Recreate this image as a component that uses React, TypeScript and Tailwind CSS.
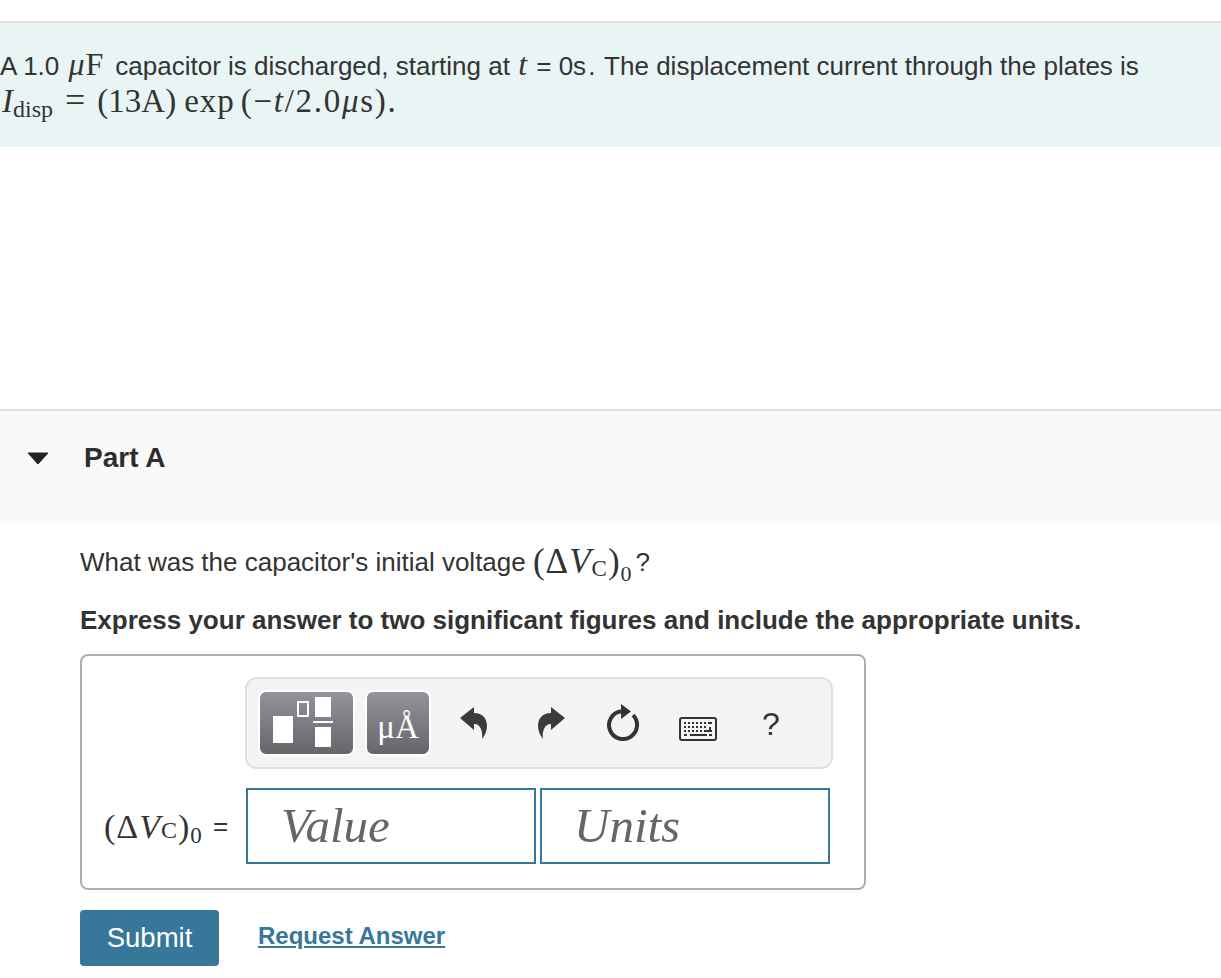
const sans = "font-['Liberation_Sans',Arial,sans-serif]"

function Serif({ children, className = '' }: { children: React.ReactNode; className?: string }) {
  return <span className={`font-['Liberation_Serif',serif] ${className}`}>{children}</span>
}

function UndoIcon({ flip = false }: { flip?: boolean }) {
  return (
    <svg width="28" height="34" viewBox="0 0 28 34" className={flip ? '-scale-x-100' : ''}>
      <path d="M1 12 L15 1 L15 7 C24 7 28 13 28 20 C28 25 26 29 23 33 C24 26 22 18 15 18 L15 24 Z" fill="#3b3b3b" />
    </svg>
  )
}

function RefreshIcon() {
  return (
    <svg width="34" height="38" viewBox="0 0 34 38">
      <path d="M15 7.200 A14 14 0 1 0 27 11.200" fill="none" stroke="#333" strokeWidth="4" />
      <path d="M15 0 L25 7.500 L15 15 Z" fill="#333" />
    </svg>
  )
}

function KeyboardIcon() {
  return (
    <svg width="38" height="24" viewBox="0 0 38 24">
      <rect x="1" y="1" width="36" height="22" rx="2" fill="#f4f4f4" stroke="#333" strokeWidth="2" />
      <path d="M5 6h2M9 6h2M13 6h2M17 6h2M21 6h2M25 6h2M29 6h4M5 10h2M9 10h2M13 10h2M17 10h2M21 10h2M25 10h2M5 14h2M9 14h2M13 14h2M17 14h2M21 14h2M25 14h8M31 10v4M5 18h3M11 18h17M30 18h3" stroke="#333" strokeWidth="2" fill="none" />
    </svg>
  )
}

function TemplateIcon() {
  return (
    <svg width="68" height="54" viewBox="0 0 68 54">
      <rect x="0" y="20" width="20" height="27" fill="#fff" />
      <rect x="25" y="6" width="10" height="14" fill="none" stroke="#fff" strokeWidth="2" />
      <rect x="42" y="1" width="16" height="20" fill="#fff" />
      <rect x="40" y="25" width="20" height="2" fill="#fff" />
      <rect x="42" y="31" width="16" height="20" fill="#fff" />
    </svg>
  )
}

export default function App() {
  return (
    <div className={`${sans} w-[1221px] h-[978px] bg-white text-[#333] text-[26px] overflow-hidden`}>
      <div className="h-[21px]" />
      <section className="h-[126px] bg-[#e9f5f5] border-t-2 border-[#e0e2e2] pt-[24px] leading-[34px]">
        <p className="whitespace-nowrap">
          A 1.0 <Serif className="text-[32px] tracking-[1px] ml-[2px]"><i>μ</i>F</Serif><span className="ml-[11px]">capacitor is discharged, starting at</span> <Serif className="text-[32px] ml-[1px]"><i>t</i></Serif><span className="ml-[2px]"> = 0s</span><span className="ml-[2px]">.</span><span className="ml-[2px]"> The displacement current through the plates is</span>
        </p>
        <p className="whitespace-nowrap">
          <Serif className="text-[33px]"><i className="ml-[2px]">I</i><span className="text-[24px] relative top-[5px]">disp</span><span className="ml-[12px] mr-[12px] text-[36px]">=</span>(13A)<span className="ml-[8px] tracking-[1px]">exp</span><span className="ml-[6px] tracking-[1.700px]">(−<i>t</i>/2.0<i>μ</i>s).</span></Serif>
        </p>
      </section>
      <div className="h-[262px]" />
      <section className="h-[114px] bg-[#f9f9f9] border-t-2 border-[#e0e0e0] flex items-start pt-[32px]">
        <svg width="22" height="13" viewBox="0 0 22 13" className="ml-[27px] mt-[9px]">
          <path d="M1 1 H21 L11 12 Z" fill="#222" stroke="#222" strokeWidth="1" strokeLinejoin="round" />
        </svg>
        <h2 className="ml-[35px] text-[28px] font-bold leading-[30px] text-[#2d2d2d]">Part A</h2>
      </section>
      <main className="pl-20">
        <p className="mt-[20px] h-[40px] leading-[38px] whitespace-nowrap">
          What was the capacitor's initial voltage <Serif className="text-[35px] tracking-[1px] align-[-2px]">(Δ<i>V</i><span className="text-[23px] relative top-[3px]">C</span>)<span className="text-[22px] relative top-[8px]">0</span></Serif><span className="ml-[3px]">?</span>
        </p>
        <p className="mt-[21px] font-bold leading-[32px] whitespace-nowrap">
          Express your answer to two significant figures and include the appropriate units.
        </p>
        <div className="mt-[18px] w-[786px] h-[236px] border-2 border-[#aeaeae] rounded-lg px-[21px] relative">
          <div className="absolute left-[163px] top-[21px] w-[588px] h-[92px] bg-[#f4f4f4] border-2 border-[#e0e0e0] rounded-xl flex items-center">
            <button className="ml-[11px] w-[97px] h-[66px] rounded-lg bg-gradient-to-b from-[#96939b] to-[#66666a] border-2 border-white flex items-center justify-center">
              <TemplateIcon />
            </button>
            <button className="ml-[10px] w-[66px] h-[66px] rounded-lg bg-gradient-to-b from-[#96939b] to-[#66666a] border-2 border-white flex items-end justify-center pb-[9px]">
              <Serif className="text-white text-[33px] leading-[36px]">μÅ</Serif>
            </button>
            <div className="ml-[28px]"><UndoIcon /></div>
            <div className="ml-[51px]"><UndoIcon flip /></div>
            <div className="ml-[40px]"><RefreshIcon /></div>
            <div className="ml-[39px] mt-[12px]"><KeyboardIcon /></div>
            <span className="ml-[45px] mt-[2px] text-[32px] leading-none">?</span>
          </div>
          <div className="absolute left-[22px] top-[132px] flex items-center h-[76px]">
            <Serif className="text-[34px] tracking-[1px] w-[103px] whitespace-nowrap">(Δ<i>V</i><span className="text-[24px]">C</span>)<span className="text-[23px] relative top-[5px]">0</span></Serif>
            <span className="ml-[6px]">=</span>
          </div>
          <div className="absolute left-[164px] top-[132px] flex gap-[4px]">
            <div className="w-[290px] h-[76px] border-2 border-[#377799] flex items-center pl-[33px]">
              <Serif className="italic text-[49px] text-[#666]">Value</Serif>
            </div>
            <div className="w-[290px] h-[76px] border-2 border-[#377799] flex items-center pl-[32px]">
              <Serif className="italic text-[49px] text-[#666]">Units</Serif>
            </div>
          </div>
        </div>
        <div className="mt-[20px] flex items-center">
          <button className="w-[139px] h-[56px] bg-[#377799] rounded text-white text-[27.500px]">Submit</button>
          <a href="#" className="ml-[39px] font-bold text-[#377799] underline text-[24px] relative -top-[2px]">Request Answer</a>
        </div>
      </main>
    </div>
  )
}
